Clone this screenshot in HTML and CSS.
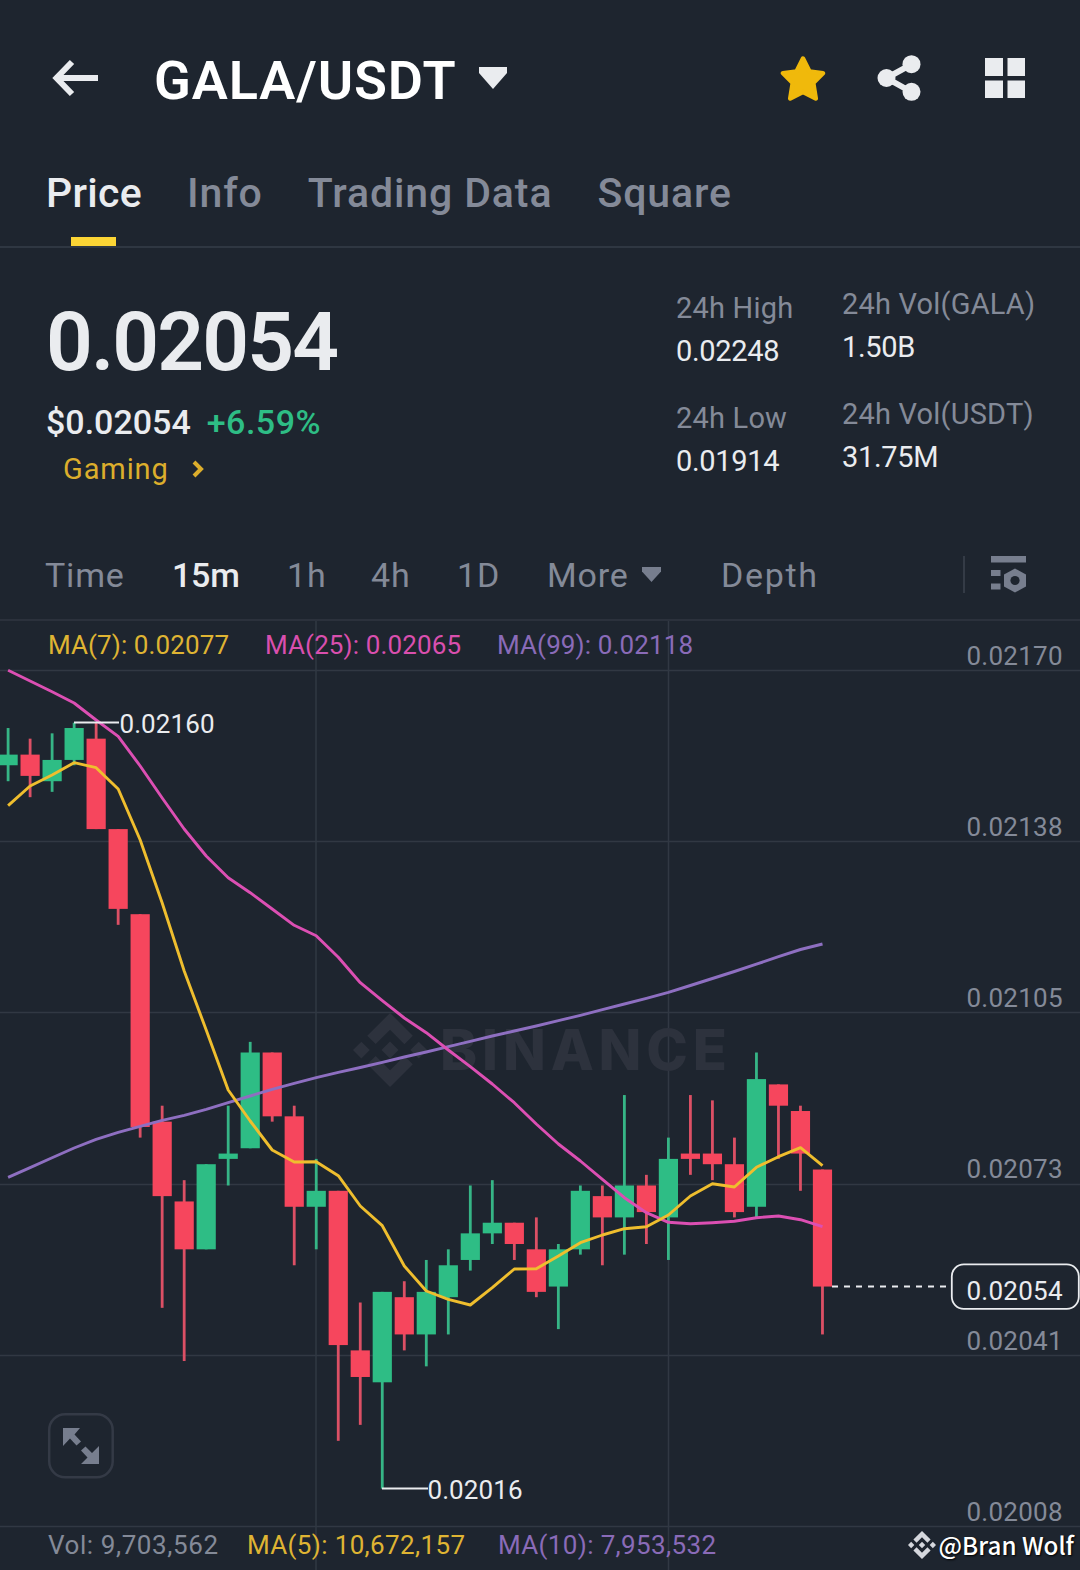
FILE: index.html
```
<!doctype html>
<html lang="en">

<head>
	<title>GALA/USDT</title>
	<meta charset="utf-8">
	<meta name="viewport" content="width=device-width, initial-scale=1.0">
	<link rel="stylesheet" href="styles.css">
</head>

<body>
	<header class="topbar">
		<svg class="back" width="46" height="38" viewBox="0 0 46 38">
			<path d="M46 19H5M20 3L4.500 19L20 35" fill="none" stroke="#eaecef" stroke-width="6" />
		</svg>
		<h1>GALA/USDT</h1>
		<svg class="caret" width="28" height="22" viewBox="0 0 28 22">
			<path d="M0 0H28V6L14 22L0 6Z" fill="#eaecef" />
		</svg>
		<div class="actions">
			<svg width="46" height="48" viewBox="0 0 46 48">
				<path d="M23 4.500L29.500 17.500L43 19.200L33.300 29L35.800 44.500L23 37.900L10.200 44.500L12.700 29L3 19.200L16.500 17.500Z" fill="#f0b90b" stroke="#f0b90b" stroke-width="4.500" stroke-linejoin="round" />
			</svg>
			<svg width="44" height="48" viewBox="0 0 44 48">
				<path d="M34.500 10.300L9.500 24L34.500 38" fill="none" stroke="#eaecef" stroke-width="6" />
				<circle cx="9.500" cy="24" r="9" fill="#eaecef" />
				<circle cx="34.500" cy="10.200" r="9" fill="#eaecef" />
				<circle cx="34.500" cy="37.800" r="9" fill="#eaecef" />
			</svg>
			<svg width="40" height="40" viewBox="0 0 40 40">
				<path d="M0 0h18v18H0zM22.500 0H40v18H22.500zM0 22.500h18V40H0zM22.500 22.500H40V40H22.500z" fill="#eaecef" />
			</svg>
		</div>
	</header>

	<nav class="tabs">
		<a class="active">Price</a>
		<a>Info</a>
		<a>Trading Data</a>
		<a>Square</a>
	</nav>

	<section class="summary">
		<div class="quote">
			<div class="price">0.02054</div>
			<div class="fiat"><span>$0.02054</span><span class="up">+6.59%</span></div>
			<div class="tag">
				Gaming
				<svg width="12" height="18" viewBox="0 0 12 18">
					<path d="M2 2l7 7-7 7" fill="none" stroke="#dcae2c" stroke-width="4" />
				</svg>
			</div>
		</div>
		<dl class="stats range">
			<dt>24h High</dt>
			<dd>0.02248</dd>
			<dt>24h Low</dt>
			<dd>0.01914</dd>
		</dl>
		<dl class="stats volume">
			<dt>24h Vol(GALA)</dt>
			<dd>1.50B</dd>
			<dt>24h Vol(USDT)</dt>
			<dd>31.75M</dd>
		</dl>
	</section>

	<nav class="periods">
		<a class="p-time">Time</a>
		<a class="p-15m active">15m</a>
		<a class="p-1h">1h</a>
		<a class="p-4h">4h</a>
		<a class="p-1d">1D</a>
		<a class="p-more">More
			<svg width="19" height="15" viewBox="0 0 19 15">
				<path d="M0 0H19V4.500L9.500 15L0 4.500Z" fill="#777e8e" />
			</svg>
		</a>
		<a class="p-depth">Depth</a>
		<span class="settings">
			<svg width="36" height="37" viewBox="0 0 36 37">
				<path d="M0 0H35V6.500H0zM0 14H9.500V20H0zM0 27.500H9.500V33.500H0z" fill="#777e8e" />
				<path d="M24 12.500L35 18.500V30.500L24 36.500L13 30.500V18.500Z" fill="#777e8e" />
				<circle cx="24" cy="24.500" r="4.600" fill="#1e252f" />
			</svg>
		</span>
	</nav>

	<main class="chart">
		<svg id="chart" width="1080" height="949" viewBox="0 621 1080 949">
			<g class="grid">
				<path d="M0 670.500H1080M0 841.500H1080M0 1012.500H1080M0 1184.500H1080M0 1355.500H1080M0 1526.500H1080" />
				<path d="M316 621V1570M668.500 621V1570" />
			</g>

			<g class="watermark">
				<path transform="translate(353 1013) scale(.585)" d="M38.730 53.200l24.590-24.580 24.600 24.600 14.300-14.310L63.320 0l-38.900 38.900zM0 63.310l14.300-14.310 14.310 14.310-14.310 14.300zM38.730 73.410l24.590 24.590 24.600-24.600 14.310 14.290-38.900 38.910-38.910-38.880zM98 63.310l14.300-14.310 14.310 14.300-14.310 14.320zM77.830 63.300L63.320 48.780 48.810 63.280l14.510 14.500z" />
				<text x="440" y="1070" textLength="287">BINANCE</text>
			</g>

			<g class="axis">
				<text x="966.500" y="664.500" textLength="96">0.02170</text>
				<text x="966.500" y="835.500" textLength="96">0.02138</text>
				<text x="966.500" y="1006.500" textLength="96">0.02105</text>
				<text x="966.500" y="1177.500" textLength="96">0.02073</text>
				<text x="966.500" y="1349.500" textLength="96">0.02041</text>
				<text x="966.500" y="1520.500" textLength="96">0.02008</text>
			</g>

			<g id="candles"></g>
			<g id="averages"></g>

			<g class="legend">
				<text class="yellow" x="48" y="653.500" textLength="181">MA(7): 0.02077</text>
				<text class="pink" x="265" y="653.500" textLength="196">MA(25): 0.02065</text>
				<text class="purple" x="497" y="653.500" textLength="196">MA(99): 0.02118</text>
				<text class="muted" x="48" y="1553.500" textLength="170">Vol: 9,703,562</text>
				<text class="yellow" x="247" y="1553.500" textLength="218">MA(5): 10,672,157</text>
				<text class="purple" x="498" y="1553.500" textLength="218">MA(10): 7,953,532</text>
			</g>

			<g class="marks">
				<path d="M74 722.500H119M382 1488.500H428" />
				<text x="119.500" y="732.500" textLength="95">0.02160</text>
				<text x="427.500" y="1498.500" textLength="95">0.02016</text>
				<path d="M832 1286.500H947" stroke-dasharray="6 6" />
				<rect x="951.800" y="1264.300" width="127" height="44.500" rx="12" />
				<text x="966.500" y="1299.500" textLength="96">0.02054</text>
			</g>

			<g class="expand">
				<rect x="49.200" y="1414.200" width="63.500" height="63" rx="16" />
				<path d="M63 1428H80L74.500 1434.500L81 1441.500L76.500 1445.500L70 1438.500L63 1446ZM99 1464V1446L92 1453L85.500 1446.500L81 1450.500L87.500 1457.500L81 1464Z" />
			</g>
		</svg>

		<div class="author">
			<svg width="28" height="28" viewBox="0 0 126.610 126.610">
				<path fill="#d5d7dd" d="M38.730 53.200l24.590-24.580 24.600 24.600 14.300-14.310L63.320 0l-38.900 38.900zM0 63.310l14.300-14.310 14.310 14.310-14.310 14.300zM38.730 73.410l24.590 24.590 24.600-24.600 14.310 14.290-38.900 38.910-38.910-38.880zM98 63.310l14.300-14.310 14.310 14.300-14.310 14.320zM77.830 63.300L63.320 48.780 48.810 63.280l14.510 14.500z" />
			</svg>
			<span>@Bran Wolf</span>
		</div>
	</main>

	<script src="chart.js"></script>
</body>

</html>
```
FILE: styles.css
```
html
{
	margin: 0 0;
	padding: 0 0;
}
body
{
	width: 1080px;
	height: 1570px;
	margin: 0 0;
	padding: 0 0;
	overflow: hidden;
	background: #1e252f;
	color: #eaecef;
	font-family: Roboto, "Liberation Sans", sans-serif;
}

svg
{
	display: block;
	flex: none;
}

/* title bar */
.topbar
{
	display: flex;
	align-items: center;
	box-sizing: border-box;
	height: 156px;
	padding: 0 55px 0 52px;
}

h1
{
	margin: 5px 22px 0 56px;
	color: #ffffff;
	font-size: 54px;
	font-weight: 600;
	line-height: 64px;
	letter-spacing: 0.9px;
}

.actions
{
	display: flex;
	align-items: center;
	margin-left: auto;
}

.actions svg
{
	margin-left: 64px;
}

.actions svg:nth-child(2)
{
	margin-left: 51px;
}

/* page tabs */
.tabs
{
	display: flex;
	box-sizing: border-box;
	height: 92px;
	padding-left: 46px;
	border-bottom: 2px solid #2f3742;
	color: #848a98;
	font-size: 41px;
	font-weight: 500;
	line-height: 74px;
	letter-spacing: 0.9px;
}

.tabs a
{
	margin-right: 45px;
	white-space: nowrap;
}

.tabs .active
{
	position: relative;
	color: #eaecef;
	letter-spacing: 0.3px;
}

.tabs .active::after
{
	content: "";
	position: absolute;
	left: 25px;
	bottom: 0;
	width: 45px;
	height: 9px;
	background: #fcd535;
}

/* last price and 24h numbers */
.summary
{
	display: flex;
	height: 285px;
}

.quote
{
	width: 630px;
	padding: 47px 0 0 46px;
}

.price
{
	font-size: 82px;
	font-weight: 600;
	line-height: 94px;
	letter-spacing: -1.9px;
}

.fiat
{
	display: flex;
	gap: 16px;
	margin-top: 13px;
	font-size: 34px;
	font-weight: 500;
	line-height: 40px;
}

.up
{
	color: #2ebd85;
	letter-spacing: 0.5px;
}

.tag
{
	display: flex;
	align-items: center;
	gap: 23px;
	margin: 9px 0 0 17px;
	color: #dcae2c;
	font-size: 29px;
	line-height: 36px;
	letter-spacing: 0.9px;
}

.stats
{
	margin: 35px 0 0 0;
	font-size: 29px;
	line-height: 42px;
	white-space: nowrap;
}

.range
{
	width: 166px;
	margin-top: 39px;
}

.stats dt
{
	color: #848a98;
	line-height: 43px;
	letter-spacing: 0.2px;
}

.stats dd
{
	margin: 0 0 25px 0;
	letter-spacing: -0.3px;
}

/* chart interval row */
.periods
{
	display: flex;
	align-items: center;
	box-sizing: border-box;
	height: 88px;
	padding: 0 53px 3px 45px;
	border-bottom: 2px solid #2b313c;
	color: #848a98;
	font-size: 34px;
	line-height: 40px;
	letter-spacing: 0.8px;
}

.periods a
{
	display: flex;
	align-items: center;
	white-space: nowrap;
}

.periods .active
{
	color: #eaecef;
	font-weight: 500;
	letter-spacing: -0.2px;
}

.p-time { width: 127px; }
.p-15m { width: 115px; }
.p-1h { width: 84px; }
.p-4h { width: 86px; }
.p-1d { width: 90px; }
.p-more { width: 174px; gap: 13px; }
.p-depth { letter-spacing: 1.7px; }

.settings
{
	display: flex;
	margin-left: auto;
	padding-left: 26px;
	border-left: 2px solid #343b46;
}

/* candle chart */
.chart
{
	position: relative;
	height: 949px;
}

.chart text
{
	font-size: 26px;
}

.grid path
{
	stroke: #313843;
	stroke-width: 1.500;
}

.watermark
{
	fill: #2d323d;
}

.chart .watermark text
{
	font-family: Inter, sans-serif;
	font-size: 56px;
	font-weight: 800;
}

.axis,
.muted
{
	fill: #848a98;
}

.yellow
{
	fill: #dfb433;
}

.pink
{
	fill: #d94fae;
}

.purple
{
	fill: #8a6bb8;
}

.marks
{
	fill: #eaecef;
}

.marks path
{
	stroke: #eaecef;
	stroke-width: 2;
}

.marks rect
{
	fill: none;
	stroke: #eaecef;
	stroke-width: 1.800;
}

.expand rect
{
	fill: #1e252f;
	stroke: #343a46;
	stroke-width: 2.500;
}

.expand path
{
	fill: #777e8e;
}

.average
{
	fill: none;
	stroke-width: 2.900;
	stroke-linejoin: round;
}

.author
{
	position: absolute;
	right: 6px;
	bottom: 9px;
	display: flex;
	align-items: center;
	gap: 3px;
	color: #ffffff;
	font-family: "Noto Sans CJK SC", sans-serif;
	font-size: 24.200px;
	font-weight: 500;
	line-height: 32px;
	text-shadow: 1px 1px 2px #000000;
}
```
FILE: chart.js
```
// open, high, low, close in units of 0.00001
var candles = [
	[2152, 2159, 2149, 2154], [2154, 2157, 2146, 2150], [2149, 2158, 2147, 2153],
	[2153, 2160, 2152, 2159], [2157, 2160, 2140, 2140], [2140, 2140, 2122, 2125],
	[2124, 2124, 2082, 2084], [2085, 2088, 2050, 2071], [2070, 2074, 2040, 2061],
	[2061, 2077, 2061, 2077], [2078, 2088, 2073, 2079], [2080, 2100, 2080, 2098],
	[2098, 2098, 2085, 2086], [2086, 2088, 2058, 2069], [2069, 2078, 2061, 2072],
	[2072, 2072, 2025, 2043], [2042, 2051, 2028, 2037], [2036, 2053, 2016, 2053],
	[2052, 2055, 2042, 2045], [2045, 2059, 2039, 2053], [2052, 2061, 2045, 2058],
	[2059, 2073, 2057, 2064], [2064, 2074, 2062, 2066], [2066, 2066, 2059, 2062],
	[2061, 2067, 2052, 2053], [2054, 2062, 2046, 2061], [2061, 2073, 2060, 2072],
	[2071, 2073, 2058, 2067], [2067, 2090, 2060, 2073], [2073, 2075, 2062, 2068],
	[2067, 2082, 2059, 2078], [2079, 2090, 2075, 2078], [2079, 2089, 2074, 2077],
	[2077, 2082, 2067, 2068], [2069, 2098, 2067, 2093], [2092, 2092, 2078, 2088],
	[2087, 2088, 2072, 2079], [2076, 2076, 2045, 2054]
];

// moving averages, one y value per candle
var ma7 = [805.7, 786, 775, 762.7, 767.7, 789, 840, 903, 971, 1030, 1090, 1121, 1150, 1162, 1161.7, 1175.7, 1206, 1225.7, 1266, 1291, 1299.3, 1305, 1287.7, 1269, 1268.7, 1256, 1242.7, 1235, 1228.7, 1226.7, 1215, 1196, 1183.7, 1187, 1167.3, 1156.7, 1147.7, 1165.7];
var ma25 = [670.3, 681, 691.7, 703, 720, 736.3, 766, 798, 829, 856, 877.7, 892.7, 909, 925.3, 935.7, 957.3, 982.7, 1000.7, 1018, 1032.7, 1050, 1066.7, 1084, 1102.7, 1124, 1144, 1161, 1179.3, 1197.7, 1212.7, 1222.3, 1223.7, 1222.7, 1221.3, 1217.7, 1216, 1219.7, 1226.7];
var ma99 = [1177.3, 1167.7, 1157.7, 1148, 1139.3, 1132.3, 1126.3, 1120.3, 1115.3, 1109.3, 1102.7, 1096, 1089.3, 1083.3, 1077.7, 1072.3, 1067.5, 1062.3, 1057, 1052, 1046.7, 1041.3, 1036, 1031, 1026, 1020.7, 1015.3, 1009.7, 1004, 998.3, 992.3, 985.5, 978.5, 971.5, 964.2, 956.7, 949.5, 944];

function xAt(i)
{
	return 8.1 + i * 22.01;
}

function yAt(price)
{
	return 722.7 + (2160 - price) * 5.3194;
}

function add(parent, name, attrs)
{
	var el = document.createElementNS('http://www.w3.org/2000/svg', name);
	for (var key in attrs)
	{
		el.setAttribute(key, attrs[key]);
	}
	document.getElementById(parent).appendChild(el);
}

candles.forEach(function (c, i)
{
	var up = c[3] > c[0];
	var x = xAt(i);
	var top = yAt(Math.max(c[0], c[3]));
	var bottom = yAt(Math.min(c[0], c[3]));
	add('candles', 'rect', { x: x - 1.4, y: yAt(c[1]), width: 2.8, height: yAt(c[2]) - yAt(c[1]), fill: up ? '#36b586' : '#dc5065' });
	add('candles', 'rect', { x: x - 9.6, y: top, width: 19.2, height: bottom - top, fill: up ? '#2ebd85' : '#f6465d' });
});

function line(values, color)
{
	var points = values.map(function (y, i)
	{
		return xAt(i).toFixed(1) + ',' + y;
	});
	add('averages', 'polyline', { 'class': 'average', points: points.join(' '), stroke: color });
}

line(ma99, '#8e6fc1');
line(ma25, '#dc4fb3');
line(ma7, '#efbe2e');
```
